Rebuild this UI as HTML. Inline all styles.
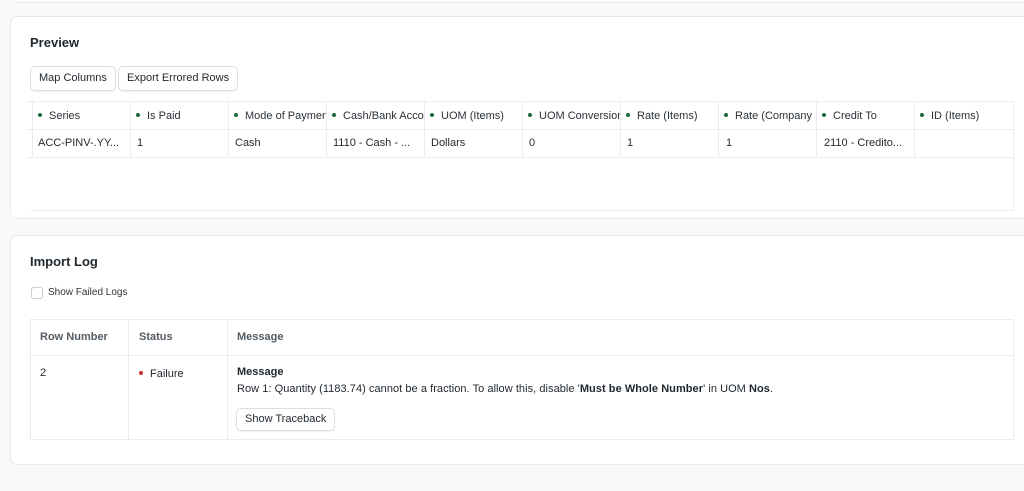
<!DOCTYPE html>
<html><head><style>
*{box-sizing:border-box;margin:0;padding:0}
body{width:1024px;height:491px;overflow:hidden;background:#f8f9f8;font-family:"Liberation Sans",sans-serif;font-size:11px;color:#1f272e;position:relative}
.card{position:absolute;left:10px;width:1030px;background:#fff;border:1px solid #e8eaea;border-radius:7px}
.a{position:absolute;white-space:nowrap}
h3{position:absolute;font-size:13px;font-weight:bold;color:#1f272e}
.btn{position:absolute;height:25px;border:1px solid #dcdfe0;border-radius:5px;background:#fff;font-size:11px;line-height:23px;padding:0 8px;box-shadow:0 1px 1px rgba(0,0,0,.06)}
.vl{position:absolute;width:1px;background:#ececec}
.hl{position:absolute;height:1px;background:#ececec}
.dot{display:inline-block;width:4px;height:4px;border-radius:50%;background:#1e6b3a;margin-right:7px;vertical-align:middle;position:relative;top:-1px}
.hd{color:#2b3238;overflow:hidden;width:92px}
</style></head><body>
<div class="card" style="top:-20px;height:23px"></div>
<div class="card" style="top:16px;height:203px">
<h3 style="left:19px;top:18px">Preview</h3>
<div class="btn" style="left:19px;top:49px">Map Columns</div>
<div class="btn" style="left:107px;top:49px">Export Errored Rows</div>
</div>
<div class="hl" style="left:27px;top:101px;width:987px"></div>
<div class="hl" style="left:27px;top:129px;width:987px"></div>
<div class="hl" style="left:27px;top:157px;width:987px"></div>
<div class="hl" style="left:30px;top:210px;width:984px"></div>
<div class="vl" style="left:1013px;top:101px;height:110px"></div>
<div class="vl" style="left:32px;top:101px;height:56px"></div>
<div class="vl" style="left:130px;top:101px;height:56px"></div>
<div class="vl" style="left:228px;top:101px;height:56px"></div>
<div class="vl" style="left:326px;top:101px;height:56px"></div>
<div class="vl" style="left:424px;top:101px;height:56px"></div>
<div class="vl" style="left:522px;top:101px;height:56px"></div>
<div class="vl" style="left:620px;top:101px;height:56px"></div>
<div class="vl" style="left:718px;top:101px;height:56px"></div>
<div class="vl" style="left:816px;top:101px;height:56px"></div>
<div class="vl" style="left:914px;top:101px;height:56px"></div>
<div class="a hd" style="left:38px;top:110px"><span class="dot"></span>Series</div>
<div class="a hd" style="left:136px;top:110px"><span class="dot"></span>Is Paid</div>
<div class="a hd" style="left:234px;top:110px"><span class="dot"></span>Mode of Payment</div>
<div class="a hd" style="left:332px;top:110px"><span class="dot"></span>Cash/Bank Account</div>
<div class="a hd" style="left:430px;top:110px"><span class="dot"></span>UOM (Items)</div>
<div class="a hd" style="left:528px;top:110px"><span class="dot"></span>UOM Conversion</div>
<div class="a hd" style="left:626px;top:110px"><span class="dot"></span>Rate (Items)</div>
<div class="a hd" style="left:724px;top:110px"><span class="dot"></span>Rate (Company</div>
<div class="a hd" style="left:822px;top:110px"><span class="dot"></span>Credit To</div>
<div class="a hd" style="left:920px;top:110px"><span class="dot"></span>ID (Items)</div>
<div class="a" style="left:38px;top:137px">ACC-PINV-.YY...</div>
<div class="a" style="left:137px;top:137px">1</div>
<div class="a" style="left:235px;top:137px">Cash</div>
<div class="a" style="left:333px;top:137px">1110 - Cash - ...</div>
<div class="a" style="left:431px;top:137px">Dollars</div>
<div class="a" style="left:529px;top:137px">0</div>
<div class="a" style="left:627px;top:137px">1</div>
<div class="a" style="left:726px;top:137px">1</div>
<div class="a" style="left:824px;top:137px">2110 - Credito...</div>

<div class="card" style="top:235px;height:230px">
<h3 style="left:19px;top:18px">Import Log</h3>
<div class="a" style="left:20px;top:51px;width:12px;height:12px;border:1px solid #c8cccf;border-radius:3px"></div>
<div class="a" style="left:37px;top:51px;font-size:10px;color:#333">Show Failed Logs</div>
</div>
<div class="a" style="left:30px;top:319px;width:984px;height:121px;border:1px solid #ececec"></div>
<div class="hl" style="left:30px;top:355px;width:984px"></div>
<div class="vl" style="left:128px;top:319px;height:121px"></div>
<div class="vl" style="left:227px;top:319px;height:121px"></div>
<div class="a" style="left:40px;top:331px;font-weight:bold;color:#525b63">Row Number</div>
<div class="a" style="left:139px;top:331px;font-weight:bold;color:#525b63">Status</div>
<div class="a" style="left:237px;top:331px;font-weight:bold;color:#525b63">Message</div>
<div class="a" style="left:40px;top:367px">2</div>
<div class="a" style="left:139px;top:368px"><span class="dot" style="background:#d22b2b"></span>Failure</div>
<div class="a" style="left:237px;top:366px;font-weight:bold">Message</div>
<div class="a" style="left:237px;top:383px;letter-spacing:0.05px">Row 1: Quantity (1183.74) cannot be a fraction. To allow this, disable '<b>Must be Whole Number</b>' in UOM <b>Nos</b>.</div>
<div class="btn" style="left:236px;top:408px;height:23px;line-height:21px">Show Traceback</div>
</body></html>
